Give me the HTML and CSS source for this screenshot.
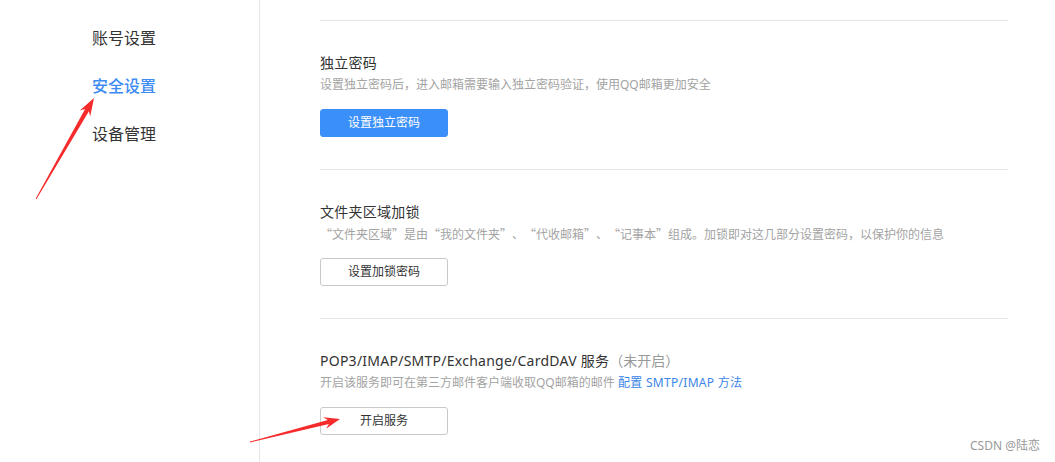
FILE: index.html
```html
<!DOCTYPE html>
<html lang="zh-CN">
<head>
<meta charset="utf-8">
<title>安全设置</title>
<link rel="stylesheet" href="styles.css">
</head>
<body>
<div class="page">
  <nav class="sidebar">
    <a class="nav-item">账号设置</a>
    <a class="nav-item active">安全设置</a>
    <a class="nav-item">设备管理</a>
  </nav>
  <main class="content">
    <section class="block">
      <h3 class="title">独立密码</h3>
      <p class="desc">设置独立密码后，进入邮箱需要输入独立密码验证，使用QQ邮箱更加安全</p>
      <button class="btn btn-primary">设置独立密码</button>
    </section>
    <section class="block">
      <h3 class="title">文件夹区域加锁</h3>
      <p class="desc desc-cjk">“文件夹区域”是由“我的文件夹”、“代收邮箱”、“记事本”组成。加锁即对这几部分设置密码，以保护你的信息</p>
      <button class="btn">设置加锁密码</button>
    </section>
    <section class="block">
      <h3 class="title">POP3/IMAP/SMTP/Exchange/CardDAV 服务<span class="state">（未开启）</span></h3>
      <p class="desc">开启该服务即可在第三方邮件客户端收取QQ邮箱的邮件 <a class="link">配置 SMTP/IMAP 方法</a></p>
      <button class="btn">开启服务</button>
    </section>
  </main>
</div>
<svg class="annot" width="1055" height="462" viewBox="0 0 1055 462">
  <polygon fill="#f52a2a" points="94,98 90.2,116.6 88.9,111.2 36.4,199.2 35.6,198.8 85.1,109.0 79.8,110.6"/>
  <polygon fill="#f52a2a" points="340,419 326,428.8 328.9,423.9 250.1,442.4 249.9,441.6 327.9,420 323,417.2"/>
</svg>
<div class="watermark">CSDN @陆恋</div>
</body>
</html>
```
FILE: styles.css
```css
* { box-sizing: border-box; }
html, body {
  margin: 0;
  padding: 0;
  background: #fff;
}
body {
  width: 1055px;
  height: 462px;
  overflow: hidden;
  position: relative;
  font-family: "Noto Sans", "Noto Sans CJK SC", sans-serif;
  color: #333;
}
.page {
  display: flex;
  height: 462px;
}
.sidebar {
  width: 260px;
  flex: none;
  border-right: 1px solid #e6e6e6;
  padding-top: 14px;
  padding-left: 92px;
  display: flex;
  flex-direction: column;
}
.nav-item {
  display: block;
  font-size: 16px;
  line-height: 48px;
  height: 48px;
  color: #333;
  white-space: nowrap;
}
.nav-item.active {
  color: #3d8bf4;
  font-weight: 500;
}
.content {
  flex: 1;
  padding: 20px 47px 0 60px;
}
.block {
  border-top: 1px solid #e6e6ea;
  padding: 32px 0 32px;
}
.title {
  margin: 0;
  font-size: 14px;
  line-height: 20px;
  font-weight: normal;
  color: #333;
  white-space: nowrap;
  letter-spacing: 0.25px;
}
.state {
  color: #999;
  letter-spacing: 0;
}
.desc {
  margin: 3px 0 0;
  font-size: 12px;
  line-height: 18px;
  color: #a3a3a3;
  white-space: nowrap;
}
.desc-cjk {
  font-family: "Noto Sans CJK SC", sans-serif;
  font-feature-settings: "fwid" 1;
  text-spacing-trim: space-all;
}
.link {
  color: #3b86e6;
  letter-spacing: 0.3px;
}
.btn {
  display: block;
  margin-top: 15px;
  width: 128px;
  height: 28px;
  padding: 0;
  font-family: inherit;
  font-size: 12px;
  line-height: 26px;
  color: #333;
  background: #fff;
  border: 1px solid #c9c9c9;
  border-radius: 3px;
}
.btn-primary {
  background: #3a8ff8;
  border-color: #3a8ff8;
  color: #fff;
}
.annot {
  position: absolute;
  left: 0;
  top: 0;
  pointer-events: none;
}
.watermark {
  position: absolute;
  right: 15px;
  top: 437px;
  font-size: 12px;
  line-height: 18px;
  color: #999;
}
```
